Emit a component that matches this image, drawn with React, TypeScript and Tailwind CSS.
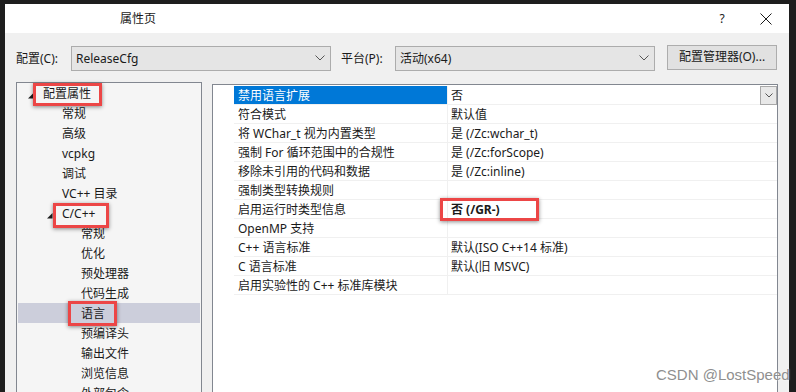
import React from "react";

const ui = "font-['Noto_Sans','Noto_Sans_CJK_SC',sans-serif]";

type TreeItem = { label: string; level: number; expanded?: boolean; selected?: boolean };

const treeItems: TreeItem[] = [
  { label: "配置属性", level: 0, expanded: true },
  { label: "常规", level: 1 },
  { label: "高级", level: 1 },
  { label: "vcpkg", level: 1 },
  { label: "调试", level: 1 },
  { label: "VC++ 目录", level: 1 },
  { label: "C/C++", level: 1, expanded: true },
  { label: "常规", level: 2 },
  { label: "优化", level: 2 },
  { label: "预处理器", level: 2 },
  { label: "代码生成", level: 2 },
  { label: "语言", level: 2, selected: true },
  { label: "预编译头", level: 2 },
  { label: "输出文件", level: 2 },
  { label: "浏览信息", level: 2 },
  { label: "外部包含", level: 2 },
];

const props: { name: string; value: string; bold?: boolean }[] = [
  { name: "禁用语言扩展", value: "否" },
  { name: "符合模式", value: "默认值" },
  { name: "将 WChar_t 视为内置类型", value: "是 (/Zc:wchar_t)" },
  { name: "强制 For 循环范围中的合规性", value: "是 (/Zc:forScope)" },
  { name: "移除未引用的代码和数据", value: "是 (/Zc:inline)" },
  { name: "强制类型转换规则", value: "" },
  { name: "启用运行时类型信息", value: "否 (/GR-)", bold: true },
  { name: "OpenMP 支持", value: "" },
  { name: "C++ 语言标准", value: "默认(ISO C++14 标准)" },
  { name: "C 语言标准", value: "默认(旧 MSVC)" },
  { name: "启用实验性的 C++ 标准库模块", value: "" },
];

const Chevron = () => (
  <svg width="10" height="6" viewBox="0 0 10 6">
    <polyline points="0.5,0.5 5,5 9.5,0.5" fill="none" stroke="#555" strokeWidth="1" />
  </svg>
);

const Expanded = () => (
  <svg width="6" height="6" viewBox="0 0 6 6" className="mt-[3px]">
    <polygon points="5.5,0 5.5,5.5 0,5.5" fill="#1e1e1e" />
  </svg>
);

const Combo = ({ text }: { text: string }) => (
  <div className="w-[260px] h-[25px] border border-[#acacac] bg-[#e5e5e5] flex items-center pl-[4px] pr-[5px]">
    <span className="flex-1 pt-[1px]">{text}</span>
    <Chevron />
  </div>
);

const RedBox = ({ cls }: { cls: string }) => (
  <div
    className={
      "absolute border-[3px] border-[#ec4646] shadow-[0_1px_4px_rgba(0,0,0,0.45)] pointer-events-none " + cls
    }
  />
);

export default function App() {
  return (
    <div className={"relative w-[796px] h-[392px] overflow-hidden bg-[#1e1e1e] text-[12px] text-[#1a1a1a] " + ui}>
      <div className="ml-[5px] mt-[4px] w-[784px] h-[388px] flex flex-col">
        {/* title bar */}
        <div className="h-[29px] bg-white flex items-center pl-[115px] shrink-0">
          <span>属性页</span>
          <span className="ml-auto w-[20px] text-center">?</span>
          <div className="ml-[11px] w-[46px] flex justify-center">
            <svg width="12" height="12" viewBox="0 0 12 12">
              <path d="M0.5 0.5 L11.5 11.5 M11.5 0.5 L0.5 11.5" stroke="#1a1a1a" strokeWidth="1" />
            </svg>
          </div>
        </div>

        <div className="flex-1 bg-[#f0f0f0] flex flex-col min-h-0">
          {/* toolbar */}
          <div className="mt-[12px] h-[26px] flex items-center pl-[11px] shrink-0">
            <span className="w-[55px] pt-[2px]">配置(C):</span>
            <Combo text="ReleaseCfg" />
            <span className="ml-[10px] w-[54px] pt-[2px]">平台(P):</span>
            <Combo text="活动(x64)" />
            <button className="ml-[12px] w-[110px] h-[25px] -mt-[2px] border border-[#adadad] bg-[#e1e1e1] flex items-center justify-center">
              配置管理器(O)...
            </button>
          </div>

          {/* main */}
          <div className="mt-[11px] flex-1 flex gap-[10px] pl-[11px] min-h-0">
            <div className="w-[186px] border-l border-t border-r border-[#828790] bg-[#f5f5f5]">
              {treeItems.map((it, i) => {
                const pad = it.level === 0 ? "pl-[10px]" : it.level === 1 ? (it.expanded ? "pl-[29px]" : "pl-[44px]") : "pl-[63px]";
                return (
                  <div
                    key={i}
                    className={
                      "h-[20px] mx-[1px] flex items-center pt-[2px] " + pad + (it.selected ? " bg-[#cccedb]" : "")
                    }
                  >
                    {it.expanded && (
                      <span className="w-[6px] mr-[9px] flex">
                        <Expanded />
                      </span>
                    )}
                    <span>{it.label}</span>
                  </div>
                );
              })}
            </div>

            <div className="mt-[2px] w-[566px] border-l border-t border-r border-[#828790] bg-white pt-[1px]">
              {props.map((p, i) => (
                <div key={i} className="h-[19px] flex">
                  <div className="w-[21px]" />
                  <div
                    className={
                      "w-[213px] pl-[4px] pt-[1px] flex items-center border-b border-[#f0f0f0] " +
                      (i === 0 ? "bg-[#0078d7] text-white" : "")
                    }
                  >
                    {p.name}
                  </div>
                  <div className="flex-1 flex items-center pl-[3px] border-l border-b border-[#f0f0f0]">
                    <span className={"pt-[1px] " + (p.bold ? "font-bold" : "")}>{p.value}</span>
                    {i === 0 && (
                      <div className="ml-auto w-[17px] h-[19px] -mb-[1px] border border-[#a8a8a8] bg-[#e8e8e8] flex items-center justify-center">
                        <svg width="8" height="5" viewBox="0 0 8 5">
                          <polyline points="0.5,0.5 4,4 7.5,0.5" fill="none" stroke="#555" strokeWidth="1" />
                        </svg>
                      </div>
                    )}
                  </div>
                </div>
              ))}
            </div>
          </div>
        </div>
      </div>

      {/* annotations */}
      <RedBox cls="left-[33px] top-[83px] w-[69px] h-[23px]" />
      <RedBox cls="left-[53px] top-[203px] w-[56px] h-[25px]" />
      <RedBox cls="left-[68px] top-[301px] w-[49px] h-[25px]" />
      <RedBox cls="left-[440px] top-[198px] w-[99px] h-[23px]" />

      <div className="absolute left-[656px] top-[364px] text-[15px] text-[#8f8f8f] font-['Liberation_Sans',sans-serif] [text-shadow:0_0_2px_#fff]">
        CSDN @LostSpeed
      </div>
    </div>
  );
}
